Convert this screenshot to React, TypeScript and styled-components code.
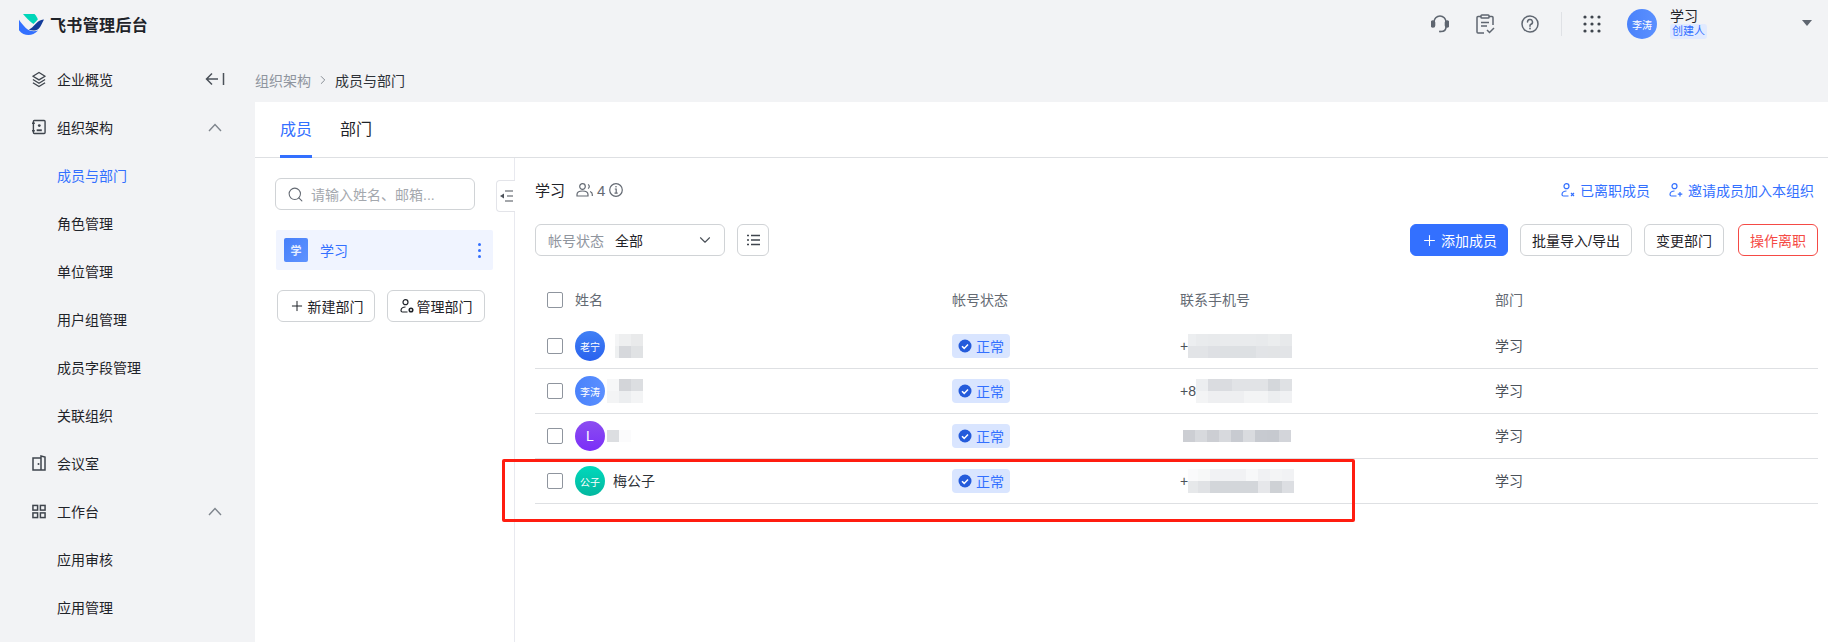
import styled, { createGlobalStyle } from 'styled-components'
import { ChevronDown, ChevronRight, Plus, Search } from 'lucide-react'

interface MosaicData {
  lead?: number
  rows: string[][]
}

interface Member {
  avatar: string
  bg: string
  name?: string
  nameMosaic?: MosaicData
  prefix: string
  phone: MosaicData
}

const members: Member[] = [
  {
    avatar: '老宁',
    bg: 'linear-gradient(180deg, #4080f5, #2a62ee)',
    nameMosaic: {
      lead: 4,
      rows: [
        ['#f4f5f6', '#eeeff0', '#e9eaeb'],
        ['#eef0f1', '#d6d8dc', '#e0e2e4'],
      ],
    },
    prefix: '+',
    phone: {
      lead: 8,
      rows: [
        ['#eceef0', '#e9ebed', '#e8eaec', '#e9ebed', '#e9ebed', '#e9ebed', '#e8eaec', '#ebedee', '#e7e9eb'],
        ['#e2e4e7', '#e2e4e7', '#dee0e4', '#dde0e3', '#dde0e3', '#dde0e3', '#e2e4e7', '#e2e4e6', '#e2e4e7'],
      ],
    },
  },
  {
    avatar: '李涛',
    bg: 'linear-gradient(90deg, #4a82fb, #5b90ff)',
    nameMosaic: {
      rows: [
        ['#f6f7f8', '#d3d5d9', '#dcdee1'],
        ['#f3f4f5', '#eceef0', '#f3f4f5'],
      ],
    },
    prefix: '+8',
    phone: {
      rows: [
        ['#eceef0', '#dadce0', '#dadce0', '#e1e3e6', '#e1e3e6', '#e1e3e6', '#d4d7db', '#dfe1e4'],
        ['#f3f4f5', '#eeeff1', '#eeeff1', '#eeeff1', '#f3f4f5', '#f3f4f5', '#eceef0', '#f0f1f3'],
      ],
    },
  },
  {
    avatar: 'L',
    bg: 'linear-gradient(180deg, #8b4df0, #7b2ff8)',
    nameMosaic: { rows: [['#dcdee1', '#fbfbfc']] },
    prefix: '',
    phone: {
      rows: [['#ccced3', '#d7d9dd', '#ccced3', '#d7d9dd', '#c8cbd1', '#d9dbdf', '#c7cad0', '#c6c9cf', '#d3d5da']],
    },
  },
  {
    avatar: '公子',
    bg: 'linear-gradient(180deg, #00d9bc, #04b79f)',
    name: '梅公子',
    prefix: '+',
    phone: {
      lead: 10,
      rows: [
        ['#fafafb', '#f7f8f8', '#f1f2f4', '#f1f2f4', '#f1f2f4', '#f7f8f9', '#f0f1f3', '#f3f4f5', '#f1f2f4'],
        ['#e6e8ea', '#e0e2e5', '#d3d6da', '#d3d6da', '#d3d6da', '#d3d6da', '#e6e7ea', '#ced1d5', '#dcdee2'],
      ],
    },
  },
]

const subItems = {
  org: ['成员与部门', '角色管理', '单位管理', '用户组管理', '成员字段管理', '关联组织'],
  work: ['应用审核', '应用管理'],
}

const GlobalStyle = createGlobalStyle`
  html, body { margin: 0; padding: 0; height: 100%; overflow: hidden; }
  body {
    background: #f2f3f5; color: #1f2329;
    font-family: "Liberation Sans", "Noto Sans CJK SC", sans-serif; font-size: 14px;
  }
  * { box-sizing: border-box; }
`

const Page = styled.div`position: relative; width: 1828px; height: 642px; overflow: hidden;`

const TopBar = styled.header`
  height: 48px; display: flex; align-items: center; padding: 0 16px 0 19px;
`
const Brand = styled.div`display: flex; align-items: center; gap: 6px;`
const BrandName = styled.span`font-size: 16px; font-weight: 700; color: #1f2329; letter-spacing: 0.35px;`
const TopActions = styled.div`margin-left: auto; display: flex; align-items: center;`
const TopIcon = styled.span`
  width: 20px; height: 20px; margin-right: 25px; display: flex; align-items: center; justify-content: center;
  color: #5f6670;
`
const TopDivider = styled.span`width: 1px; height: 24px; background: #dfe1e5; margin: 0 20px 0 -4px;`
const UserAvatar = styled.span`
  width: 30px; height: 30px; border-radius: 50%; margin-right: 13px;
  background: linear-gradient(90deg, #4a82fb, #5b90ff);
  color: #fff; font-size: 10px; display: flex; align-items: center; justify-content: center;
`
const UserInfo = styled.div`width: 132px; display: flex; flex-direction: column; align-items: flex-start;`
const UserName = styled.span`font-size: 14px; line-height: 16px; margin-top: -2px; color: #1f2329;`
const RoleTag = styled.span`
  font-size: 11px; line-height: 15px; padding: 0 2px; border-radius: 3px; background: #e1eaff; color: #3370ff;
`
const Caret = styled.span`
  width: 0; height: 0; border-left: 5px solid transparent; border-right: 5px solid transparent;
  border-top: 6px solid #5f6670; margin-bottom: 2px;
`

const Body = styled.div`display: flex; height: 594px;`

const Sidebar = styled.nav`width: 255px; flex: none; padding-top: 8px;`
const NavItem = styled.div<{ $active?: boolean; $sub?: boolean }>`
  height: 48px; display: flex; align-items: center; gap: 11px;
  padding: ${p => (p.$sub ? '0 0 2px 57px' : '0 30px 2px 32px')};
  color: ${p => (p.$active ? '#3370ff' : '#1f2329')}; font-size: 14px;
`
const NavIcon = styled.span`width: 14px; height: 16px; flex: none; display: flex; align-items: center; justify-content: center; color: #3f454d;`
const NavTrail = styled.span`margin-left: auto; width: 20px; display: flex; justify-content: center; color: #7f858d;`

const Main = styled.main`flex: 1; min-width: 0; display: flex; flex-direction: column;`
const Crumbs = styled.div`height: 54px; padding-top: 10px; display: flex; align-items: center; font-size: 14px; color: #8f959e;`
const CrumbSep = styled.span`display: flex; margin: 0 5px; color: #7f858d;`
const CrumbNow = styled.span`color: #2e3238;`

const Content = styled.section`flex: 1; background: #fff; display: flex; flex-direction: column; min-height: 0;`
const Tabs = styled.div`height: 56px; border-bottom: 1px solid #dee0e3; display: flex; padding-left: 25px; gap: 28px;`
const Tab = styled.div<{ $active?: boolean }>`
  height: 56px; line-height: 56px; font-size: 16px;
  color: ${p => (p.$active ? '#3370ff' : '#1f2329')};
  border-bottom: 3px solid ${p => (p.$active ? '#3370ff' : 'transparent')};
  border-radius: 2px 2px 0 0;
`
const Split = styled.div`flex: 1; display: flex; min-height: 0;`

const DeptPane = styled.aside`
  position: relative; width: 260px; flex: none; border-right: 1px solid #e8e9ef; padding: 20px 0 0 20px;
`
const SearchBox = styled.div`
  width: 200px; height: 32px; border: 1px solid #d0d3d6; border-radius: 6px;
  display: flex; align-items: center; gap: 7px; padding-left: 11px; color: #a4a8ae;
`
const SearchIcon = styled.span`display: flex; color: #646a73;`
const DeptRow = styled.div`
  width: 217px; height: 40px; margin: 20px 0 0 1px; background: #f0f4ff; border-radius: 2px;
  display: flex; align-items: center; padding: 0 12px 0 8px; color: #3370ff;
`
const DeptBadge = styled.span`
  width: 24px; height: 24px; border-radius: 2px; margin-right: 12px; background: linear-gradient(135deg, #4680fa, #5f93ff);
  color: #e8f0ff; font-size: 11px; font-weight: 700; display: flex; align-items: center; justify-content: center;
`
const DeptMore = styled.span`margin-left: auto; display: flex; flex-direction: column; gap: 3px;`
const DeptDot = styled.i`display: block; width: 3px; height: 3px; border-radius: 50%; background: #3370ff;`
const DeptActions = styled.div`display: flex; gap: 12px; margin: 20px 0 0 2px;`

const Btn = styled.button<{ $kind?: 'primary' | 'danger'; $w: number }>`
  width: ${p => p.$w}px; height: 32px; padding: 0; border-radius: 6px; font: inherit; font-size: 14px;
  display: flex; align-items: center; justify-content: center; gap: 3px;
  margin-left: ${p => (p.$kind === 'danger' ? '2px' : '0')};
  background: ${p => (p.$kind === 'primary' ? '#3370ff' : '#fff')};
  color: ${p => (p.$kind === 'primary' ? '#fff' : p.$kind === 'danger' ? '#f54a45' : '#1f2329')};
  border: 1px solid ${p => (p.$kind === 'primary' ? '#3370ff' : p.$kind === 'danger' ? '#f54a45' : '#d0d3d6')};
`
const CollapseTab = styled.span`
  position: absolute; right: -1px; top: 22px; width: 19px; height: 32px; background: #fff;
  border: 1px solid #e3e4e9; border-right: none; border-radius: 4px 0 0 4px;
  display: flex; align-items: center; justify-content: center; color: #4b5159;
`

const MemberPane = styled.div`flex: 1; min-width: 0; padding: 21px 10px 0 20px;`
const TitleRow = styled.div`height: 22px; display: flex; align-items: center;`
const TitleText = styled.span`font-size: 15px; color: #1f2329; margin: -2px 11px 0 0;`
const Count = styled.span`display: flex; align-items: center; color: #646a73; font-size: 15px; gap: 4px;`
const LinkGroup = styled.div`margin-left: auto; display: flex; gap: 19px; padding-right: 4px;`
const LinkAction = styled.span`display: flex; align-items: center; gap: 5px; color: #3370ff; font-size: 14px;`

const Toolbar = styled.div`display: flex; align-items: center; margin-top: 23px;`
const Filter = styled.div`
  width: 190px; height: 32px; border: 1px solid #d0d3d6; border-radius: 6px;
  display: flex; align-items: center; padding: 0 10px 0 12px; gap: 11px;
`
const FilterLabel = styled.span`color: #8f959e;`
const FilterArrow = styled.span`margin-left: auto; display: flex; color: #4b5159;`
const ListBtn = styled.span`
  width: 32px; height: 32px; margin-left: 12px; border: 1px solid #d0d3d6; border-radius: 6px;
  display: flex; align-items: center; justify-content: center; color: #3f454d;
`
const ToolbarRight = styled.div`margin-left: auto; display: flex; gap: 12px;`

const TableRow = styled.div<{ $head?: boolean }>`
  display: grid; grid-template-columns: 28px 377px 228px 315px 1fr; align-items: center;
  height: ${p => (p.$head ? '48px' : '45px')}; padding-left: 12px;
  ${p => (p.$head ? 'color: #646a73;' : 'border-bottom: 1px solid #dee0e3; color: #2e3238;')}
`
const Head = styled(TableRow)`margin-top: 20px;`
const HeadCell = styled.span`padding-bottom: 2px;`
const Check = styled.span`width: 16px; height: 16px; border: 1px solid #8f959e; border-radius: 2px; background: #fff;`
const NameCell = styled.div`display: flex; align-items: center; min-width: 0;`
const Avatar = styled.span<{ $bg: string; $large: boolean }>`
  width: 30px; height: 30px; border-radius: 50%; background: ${p => p.$bg}; color: #fff; flex: none;
  font-size: ${p => (p.$large ? '14px' : '10px')}; display: flex; align-items: center; justify-content: center;
`
const MemberName = styled.span`margin: 0 0 2px 8px;`
const StatusTag = styled.span`
  width: 58px; height: 24px; border-radius: 4px; background: #d9e5ff; color: #3370ff;
  display: flex; align-items: center; justify-content: center; gap: 4px;
`
const PhoneCell = styled.div`display: flex; align-items: center; color: #4b5159;`
const DeptCell = styled.span`color: #4b5159; padding-bottom: 2px;`
const MosaicGrid = styled.span<{ $cols: string; $gapLeft: number }>`
  display: inline-grid; grid-template-columns: ${p => p.$cols}; grid-auto-rows: 12px; margin-left: ${p => p.$gapLeft}px;
`
const Marker = styled.div`
  position: absolute; left: 502px; top: 459px; width: 853px; height: 63px;
  border: 3px solid #ff1d10; border-radius: 2px; pointer-events: none;
`

function Mosaic({ data, gapLeft = 0 }: { data: MosaicData; gapLeft?: number }) {
  const n = data.rows[0].length
  const cols = data.lead ? `${data.lead}px repeat(${n - 1}, 12px)` : `repeat(${n}, 12px)`
  return (
    <MosaicGrid $cols={cols} $gapLeft={gapLeft}>
      {data.rows.flat().map((c, i) => <span key={i} style={{ background: c }} />)}
    </MosaicGrid>
  )
}

const Logo = () => (
  <svg width="25" height="21" viewBox="0 0 25 21">
    <path d="M4 0h11.500c1.600 1.600 2.800 3.600 3.300 5.600L14.500 10C11 7.500 7 3.500 4 0z" fill="#00d6b9" />
    <path d="M25 5.500c-2.400.3-4.600 1-6.400 2.400-1.700 1.300-3 3-4.500 4.600-1.300 1.300-2.700 2.400-4.300 3 3 1.400 6.600 1.400 9.600-.5 2.600-2.600 3.800-6.200 5.600-9.500z" fill="#133c9a" />
    <path d="M0 5.800v10.400C2.500 19.500 6 21 9.500 21c3.400 0 6.500-1.300 9.600-4.500-4 1.400-8.500 1-12.300-2.500C4.300 11.700 2 8.800 0 5.800z" fill="#3370ff" />
  </svg>
)

const Headset = () => (
  <svg width="18" height="20" viewBox="0 0 18 20" fill="none" stroke="currentColor" strokeWidth="1.6">
    <path d="M3 10V8a6 6 0 0 1 12 0v2" />
    <rect x="0.500" y="7" width="3" height="6" rx="1.500" fill="currentColor" />
    <rect x="14.500" y="7" width="3" height="6" rx="1.500" fill="currentColor" />
    <path d="M15 13c0 3-2 4.500-5 4.500" strokeLinecap="round" />
    <circle cx="9" cy="17.500" r="1" fill="currentColor" stroke="none" />
  </svg>
)

const Clipboard = () => (
  <svg width="19" height="20" viewBox="0 0 19 20" fill="none" stroke="currentColor" strokeWidth="1.500">
    <path d="M5 2.500H2a1 1 0 0 0-1 1V18a1 1 0 0 0 1 1h6M13 2.500h3a1 1 0 0 1 1 1V11" />
    <rect x="5" y="1" width="8" height="3" rx="0.800" />
    <path d="M5 8.500h8M5 12h6" />
    <path d="M11 16l2.500 2.500L18 14" />
  </svg>
)

const Help = () => (
  <svg width="18" height="18" viewBox="0 0 18 18" fill="none" stroke="currentColor" strokeWidth="1.500">
    <circle cx="9" cy="9" r="8" />
    <path d="M6.500 7a2.500 2.500 0 1 1 3.500 2.300c-.7.300-1 .8-1 1.500v.4" strokeLinecap="round" />
    <circle cx="9" cy="13.500" r="0.900" fill="currentColor" stroke="none" />
  </svg>
)

const Dots = () => (
  <svg width="18" height="18" viewBox="0 0 18 18" fill="#3f454d">
    {[2, 9, 16].flatMap(y => [2, 9, 16].map(x => <circle key={`${x}-${y}`} cx={x} cy={y} r="1.600" />))}
  </svg>
)

const BackArrow = () => (
  <svg width="20" height="14" viewBox="0 0 20 14" fill="none" stroke="#4b5159" strokeWidth="1.500">
    <path d="M13 7H2M7 1.500L1.500 7 7 12.500M18.500 1v12" />
  </svg>
)

const FoldUp = () => (
  <svg width="14" height="9" viewBox="0 0 14 9" fill="none" stroke="currentColor" strokeWidth="1.400">
    <path d="M1 8l6-6.500L13 8" />
  </svg>
)

const StackIcon = () => (
  <svg width="15" height="17" viewBox="0 0 15 17" fill="none" stroke="currentColor" strokeWidth="1.500" strokeLinejoin="round">
    <path d="M7.500 1L14 5l-6.500 4L1 5z" />
    <path d="M1 8.500l6.500 4 6.500-4" />
    <path d="M1 12l6.500 4 6.500-4" />
  </svg>
)

const OrgIcon = () => (
  <svg width="15" height="16" viewBox="0 0 15 16" fill="none" stroke="currentColor" strokeWidth="1.500">
    <rect x="1.500" y="1" width="12.500" height="14" rx="1" />
    <path d="M0 4h3M0 12h3" />
    <circle cx="7.800" cy="6.500" r="1.500" fill="currentColor" stroke="none" />
    <path d="M5 11.500h5.500" strokeWidth="2" />
  </svg>
)

const DoorIcon = () => (
  <svg width="14" height="16" viewBox="0 0 14 16" fill="none" stroke="currentColor" strokeWidth="1.500">
    <path d="M9 3H1v12h8V1l4 1v13H9" />
    <circle cx="6.500" cy="9" r="1" fill="currentColor" stroke="none" />
  </svg>
)

const GridIcon = () => (
  <svg width="15" height="15" viewBox="0 0 15 15" fill="none" stroke="currentColor" strokeWidth="1.600">
    <rect x="1" y="1" width="5" height="5" />
    <rect x="9" y="1" width="5" height="5" />
    <rect x="1" y="9" width="5" height="5" />
    <rect x="9" y="9" width="5" height="5" />
  </svg>
)

const PersonIcon = ({ mark }: { mark?: 'x' | 'plus' | 'gear' }) => (
  <svg width="14" height="14" viewBox="0 0 14 14" fill="none" stroke="currentColor" strokeWidth="1.200">
    <circle cx="5.500" cy="3.200" r="2.500" />
    <path d="M7.500 13H2.500a1.500 1.500 0 0 1-1.500-1.500c0-2 2-3.500 4.500-3.500" />
    {mark === 'x' && <path d="M10 10l3 3M13 10l-3 3" />}
    {mark === 'plus' && <path d="M11 9v4.500M8.800 11.200h4.500" />}
    {mark === 'gear' && <circle cx="11" cy="11" r="1.800" strokeWidth="1.500" />}
  </svg>
)

const TeamIcon = () => (
  <svg width="17" height="14" viewBox="0 0 17 14" fill="none" stroke="currentColor" strokeWidth="1.200">
    <circle cx="6.500" cy="3.500" r="2.800" />
    <path d="M1 13v-1.500C1 9.500 3 8 6.500 8S12 9.500 12 11.500V13z" />
    <path d="M12 1.500a2.200 2.200 0 0 1 0 4M14 8.500c1.500.5 2.300 1.500 2.300 3V13" />
  </svg>
)

const InfoIcon = () => (
  <svg width="14" height="14" viewBox="0 0 14 14" fill="none" stroke="#646a73" strokeWidth="1.200">
    <circle cx="7" cy="7" r="6.300" />
    <path d="M5.800 6h1.400v4M5.500 10.200h3.200" />
    <circle cx="7" cy="3.800" r="0.800" fill="#646a73" stroke="none" />
  </svg>
)

const ListIcon = () => (
  <svg width="13" height="12" viewBox="0 0 13 12" fill="none" stroke="currentColor" strokeWidth="1.300">
    <path d="M0 1.500h2M4 1.500h9M0 6h2M4 6h9M0 10.500h2M4 10.500h9" />
  </svg>
)

const CollapseIcon = () => (
  <svg width="13" height="12" viewBox="0 0 13 12" fill="none" stroke="currentColor" strokeWidth="1.200">
    <path d="M5 1h8M7 6h6M5 11h8" />
    <path d="M4 3.500v5L0 6z" fill="currentColor" stroke="none" />
  </svg>
)

const CheckBadge = () => (
  <svg width="14" height="14" viewBox="0 0 14 14">
    <circle cx="7" cy="7" r="6.500" fill="#245bdb" />
    <path d="M4 7.200l2.200 2.200L10 5.500" fill="none" stroke="#fff" strokeWidth="1.500" />
  </svg>
)

export default function App() {
  return (
    <Page>
      <GlobalStyle />
      <TopBar>
        <Brand>
          <Logo />
          <BrandName>飞书管理后台</BrandName>
        </Brand>
        <TopActions>
          <TopIcon><Headset /></TopIcon>
          <TopIcon><Clipboard /></TopIcon>
          <TopIcon><Help /></TopIcon>
          <TopDivider />
          <TopIcon><Dots /></TopIcon>
          <UserAvatar>李涛</UserAvatar>
          <UserInfo>
            <UserName>学习</UserName>
            <RoleTag>创建人</RoleTag>
          </UserInfo>
          <Caret />
        </TopActions>
      </TopBar>

      <Body>
        <Sidebar>
          <NavItem>
            <NavIcon><StackIcon /></NavIcon>
            企业概览
            <NavTrail><BackArrow /></NavTrail>
          </NavItem>
          <NavItem>
            <NavIcon><OrgIcon /></NavIcon>
            组织架构
            <NavTrail><FoldUp /></NavTrail>
          </NavItem>
          {subItems.org.map((label, i) => (
            <NavItem key={label} $sub $active={i === 0}>{label}</NavItem>
          ))}
          <NavItem>
            <NavIcon><DoorIcon /></NavIcon>
            会议室
          </NavItem>
          <NavItem>
            <NavIcon><GridIcon /></NavIcon>
            工作台
            <NavTrail><FoldUp /></NavTrail>
          </NavItem>
          {subItems.work.map(label => (
            <NavItem key={label} $sub>{label}</NavItem>
          ))}
        </Sidebar>

        <Main>
          <Crumbs>
            组织架构
            <CrumbSep><ChevronRight size={14} strokeWidth={1.6} /></CrumbSep>
            <CrumbNow>成员与部门</CrumbNow>
          </Crumbs>
          <Content>
            <Tabs>
              <Tab $active>成员</Tab>
              <Tab>部门</Tab>
            </Tabs>
            <Split>
              <DeptPane>
                <SearchBox>
                  <SearchIcon><Search size={17} strokeWidth={1.5} /></SearchIcon>
                  请输入姓名、邮箱...
                </SearchBox>
                <DeptRow>
                  <DeptBadge>学</DeptBadge>
                  学习
                  <DeptMore><DeptDot /><DeptDot /><DeptDot /></DeptMore>
                </DeptRow>
                <DeptActions>
                  <Btn $w={98}><Plus size={16} strokeWidth={1.5} />新建部门</Btn>
                  <Btn $w={98}><PersonIcon mark="gear" />管理部门</Btn>
                </DeptActions>
                <CollapseTab><CollapseIcon /></CollapseTab>
              </DeptPane>

              <MemberPane>
                <TitleRow>
                  <TitleText>学习</TitleText>
                  <Count><TeamIcon />4<InfoIcon /></Count>
                  <LinkGroup>
                    <LinkAction><PersonIcon mark="x" />已离职成员</LinkAction>
                    <LinkAction><PersonIcon mark="plus" />邀请成员加入本组织</LinkAction>
                  </LinkGroup>
                </TitleRow>
                <Toolbar>
                  <Filter>
                    <FilterLabel>帐号状态</FilterLabel>
                    全部
                    <FilterArrow><ChevronDown size={18} strokeWidth={1.5} /></FilterArrow>
                  </Filter>
                  <ListBtn><ListIcon /></ListBtn>
                  <ToolbarRight>
                    <Btn $kind="primary" $w={98}><Plus size={17} strokeWidth={1.5} />添加成员</Btn>
                    <Btn $w={112}>批量导入/导出</Btn>
                    <Btn $w={80}>变更部门</Btn>
                    <Btn $kind="danger" $w={80}>操作离职</Btn>
                  </ToolbarRight>
                </Toolbar>

                <Head $head>
                  <Check />
                  <HeadCell>姓名</HeadCell>
                  <HeadCell>帐号状态</HeadCell>
                  <HeadCell>联系手机号</HeadCell>
                  <HeadCell>部门</HeadCell>
                </Head>
                {members.map(m => (
                  <TableRow key={m.avatar}>
                    <Check />
                    <NameCell>
                      <Avatar $bg={m.bg} $large={m.avatar.length === 1}>{m.avatar}</Avatar>
                      {m.name && <MemberName>{m.name}</MemberName>}
                      {m.nameMosaic && <Mosaic data={m.nameMosaic} gapLeft={m.nameMosaic.lead ? 10 : 2} />}
                    </NameCell>
                    <StatusTag><CheckBadge />正常</StatusTag>
                    <PhoneCell>
                      {m.prefix}
                      <Mosaic data={m.phone} gapLeft={m.prefix ? 0 : 3} />
                    </PhoneCell>
                    <DeptCell>学习</DeptCell>
                  </TableRow>
                ))}
              </MemberPane>
            </Split>
          </Content>
        </Main>
      </Body>
      <Marker />
    </Page>
  )
}
